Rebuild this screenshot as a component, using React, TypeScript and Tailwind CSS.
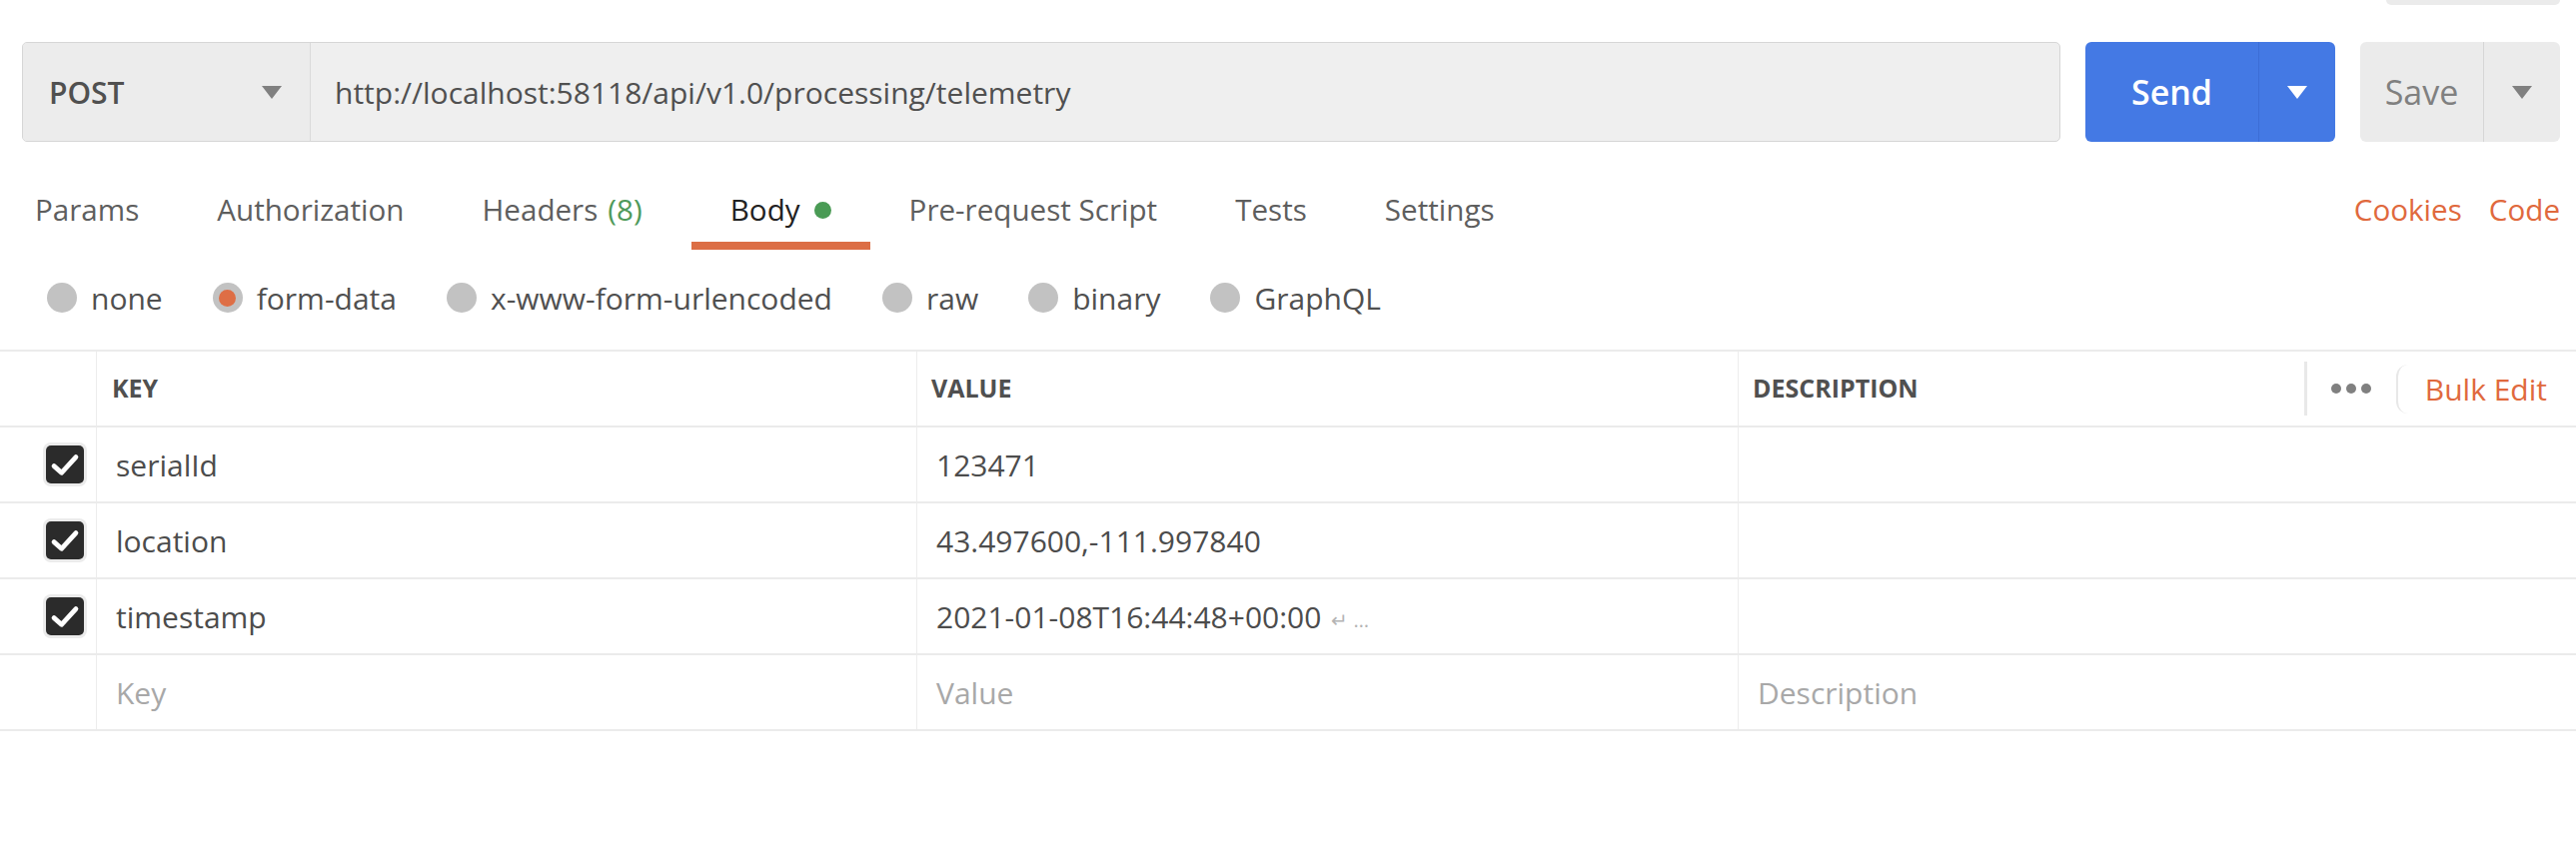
import React from "react"

const tabs = [
  { label: "Params" },
  { label: "Authorization" },
  { label: "Headers", count: "(8)" },
  { label: "Body", active: true, dot: true },
  { label: "Pre-request Script" },
  { label: "Tests" },
  { label: "Settings" },
]

const modes = ["none", "form-data", "x-www-form-urlencoded", "raw", "binary", "GraphQL"]

const rows = [
  { key: "serialId", value: "123471" },
  { key: "location", value: "43.497600,-111.997840" },
  { key: "timestamp", value: "2021-01-08T16:44:48+00:00", multiline: true },
]

function Caret({ color }: { color: string }) {
  return (
    <svg width="20" height="13" viewBox="0 0 20 13">
      <polygon points="0,0 20,0 10,13" fill={color} />
    </svg>
  )
}

function Checkbox() {
  return (
    <div className="w-[44px] h-[44px] rounded-[8px] bg-[#ebebeb] p-[3px]">
      <div className="w-full h-full rounded-[5px] bg-[#2b2b2b] flex items-center justify-center">
        <svg width="32" height="32" viewBox="0 0 24 24">
          <path
            d="M3.8 13.2 L9.4 18.2 L20.2 6.4"
            fill="none"
            stroke="#fff"
            strokeWidth="3.6"
            strokeLinecap="round"
            strokeLinejoin="round"
          />
        </svg>
      </div>
    </div>
  )
}

export default function App() {
  return (
    <div
      className="w-[2578px] h-[868px] bg-white text-[#505050] overflow-hidden"
      style={{ fontFamily: "'Open Sans', 'Liberation Sans', sans-serif" }}
    >
      {/* cut-off button at top */}
      <div className="flex justify-end pr-[16px]">
        <div className="w-[174px] h-[5px] rounded-b-[5px] bg-[#ebebeb]" />
      </div>

      {/* url row */}
      <div className="flex items-stretch h-[100px] mt-[37px] pl-[22px] pr-[16px] gap-[25px]">
        <div className="flex-1 flex rounded-[5px] border border-[#d6d6d6] bg-[#efefef] overflow-hidden">
          <div className="w-[288px] shrink-0 flex items-center justify-between pl-[26px] pr-[28px] bg-[#ececec] border-r border-[#dadada]">
            <span className="text-[30px] font-semibold text-[#505050]">POST</span>
            <Caret color="#808080" />
          </div>
          <div className="flex items-center pl-[24px] text-[30px] text-[#505050]">
            http://localhost:58118/api/v1.0/processing/telemetry
          </div>
        </div>
        <div className="w-[250px] flex rounded-[6px] bg-[#4479e4] text-white">
          <div className="w-[174px] flex items-center justify-center text-[34px] font-semibold border-r border-[#3c6dd6]">
            Send
          </div>
          <div className="flex-1 flex items-center justify-center">
            <Caret color="#ffffff" />
          </div>
        </div>
        <div className="w-[200px] flex rounded-[6px] bg-[#ebebeb]">
          <div className="w-[124px] flex items-center justify-center text-[34px] text-[#808080] border-r border-[#d6d6d6]">
            Save
          </div>
          <div className="flex-1 flex items-center justify-center">
            <Caret color="#808080" />
          </div>
        </div>
      </div>

      {/* tabs */}
      <div className="flex mt-[28px] ml-[-4px] pr-[16px] text-[29.6px]">
        {tabs.map((t) => (
          <div
            key={t.label}
            className={
              "h-[80px] pt-[8px] px-[39px] flex items-center border-b-[8px] " +
              (t.active ? "border-[#dc6e45] text-[#222222]" : "border-transparent text-[#5e5e5e]")
            }
          >
            {t.label}
            {t.count && <span className="ml-[10px] mr-[10px] text-[#4f9a5a]">{t.count}</span>}
            {t.dot && <span className="ml-[14px] w-[17px] h-[17px] rounded-full bg-[#4a9b55]" />}
          </div>
        ))}
        <div className="ml-auto h-[80px] pt-[8px] pb-[8px] flex items-center gap-[27px] text-[#e0693d]">
          <span>Cookies</span>
          <span>Code</span>
        </div>
      </div>

      {/* body modes */}
      <div className="h-[100px] pb-[4px] pl-[47px] flex items-center gap-[50px] text-[30px] text-[#505050]">
        {modes.map((m) => (
          <div key={m} className="flex items-center gap-[14px]">
            <div className="w-[30px] h-[30px] rounded-full bg-[#c2c2c2] flex items-center justify-center">
              {m === "form-data" && <div className="w-[17px] h-[17px] rounded-full bg-[#de6e45]" />}
            </div>
            <span>{m}</span>
          </div>
        ))}
      </div>

      {/* key/value table */}
      <div className="border-t-2 border-[#ebebeb]">
        <div className="flex h-[76px] border-b-2 border-[#ebebeb] text-[25px] font-bold text-[#505050]">
          <div className="w-[97px] shrink-0 border-r border-[#ededed]" />
          <div className="w-[821px] shrink-0 flex items-center pl-[15px] border-r border-[#ededed]">KEY</div>
          <div className="w-[822px] shrink-0 flex items-center pl-[14px] border-r border-[#ededed]">VALUE</div>
          <div className="flex-1 flex items-center pl-[14px]">
            <span>DESCRIPTION</span>
            <div className="ml-auto flex items-center h-full">
              <div className="w-[3px] h-[54px] bg-[#e8e8e8]" />
              <div className="flex gap-[5px] ml-[24px]">
                <span className="w-[10px] h-[10px] rounded-full bg-[#808080]" />
                <span className="w-[10px] h-[10px] rounded-full bg-[#808080]" />
                <span className="w-[10px] h-[10px] rounded-full bg-[#808080]" />
              </div>
              <div className="ml-[25px] h-[49px] flex items-center pl-[27px] pr-[29px] border-l-2 border-[#e8e8e8] rounded-l-[12px] text-[30px] font-normal text-[#e0693d]">
                Bulk Edit
              </div>
            </div>
          </div>
        </div>

        {rows.map((r) => (
          <div key={r.key} className="flex h-[76px] border-b-2 border-[#ebebeb] text-[30px] text-[#4c4c4c]">
            <div className="w-[97px] shrink-0 flex items-center pl-[43px] border-r border-[#ededed]">
              <Checkbox />
            </div>
            <div className="w-[821px] shrink-0 flex items-center pl-[19px] border-r border-[#ededed]">{r.key}</div>
            <div className="w-[822px] shrink-0 flex items-center pl-[19px] border-r border-[#ededed]">
              {r.value}
              {r.multiline && (
                <span className="ml-[10px] mt-[8px] text-[20px] text-[#b4b4b4]">↵ …</span>
              )}
            </div>
            <div className="flex-1" />
          </div>
        ))}

        <div className="flex h-[76px] border-b-2 border-[#ebebeb] text-[30px] text-[#a8a8a8]">
          <div className="w-[97px] shrink-0 border-r border-[#ededed]" />
          <div className="w-[821px] shrink-0 flex items-center pl-[19px] border-r border-[#ededed]">Key</div>
          <div className="w-[822px] shrink-0 flex items-center pl-[19px] border-r border-[#ededed]">Value</div>
          <div className="flex-1 flex items-center pl-[19px]">Description</div>
        </div>
      </div>
    </div>
  )
}
